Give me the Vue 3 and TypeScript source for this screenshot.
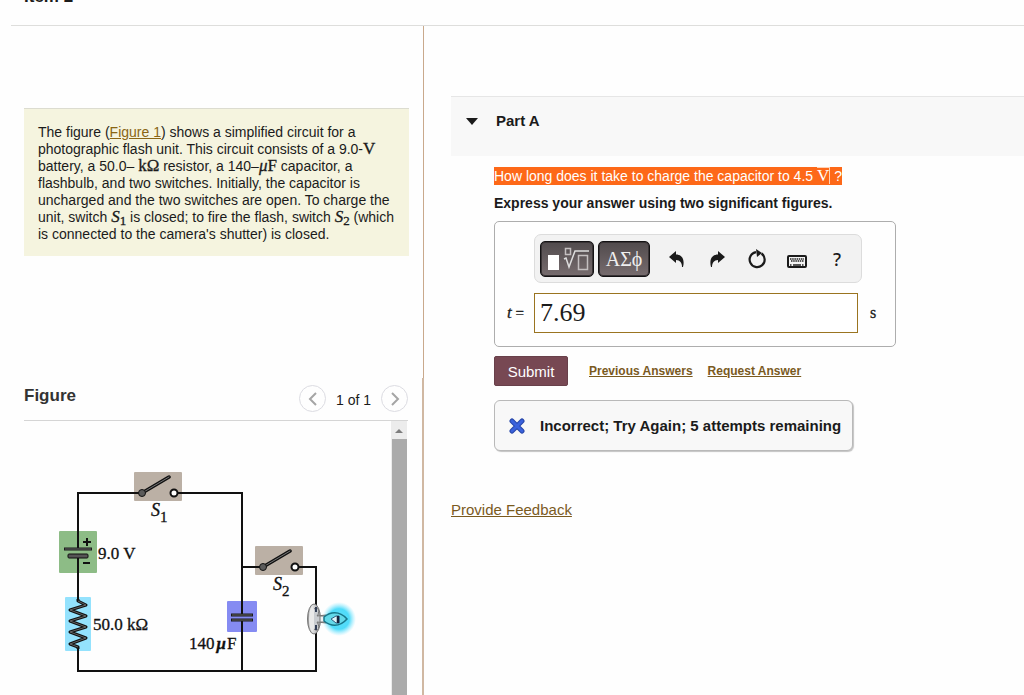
<script setup lang="ts">
import { ref } from 'vue'

const answer = ref('7.69')
const expanded = ref(true)
</script>

<template>
  <div class="page">
    <header class="item-bar"><h1>Item 2</h1></header>
    <main class="columns">
      <section class="left">
        <div class="upper">
          <p class="problem">
            The figure (<a href="#figure">Figure 1</a>) shows a simplified circuit for a photographic flash unit.
            This circuit consists of a 9.0-<span class="math">V</span> battery, a 50.0– <span class="math">kΩ</span>
            resistor, a 140–<span class="math"><i>μ</i>F</span> capacitor, a flashbulb, and two switches. Initially, the
            capacitor is uncharged and the two switches are open. To charge the unit, switch
            <span class="math"><i>S</i><sub>1</sub></span> is closed; to fire the flash, switch
            <span class="math"><i>S</i><sub>2</sub></span> (which is connected to the camera's shutter) is closed.
          </p>
        </div>
        <div id="figure" class="figure">
          <div class="figure-head">
            <h2>Figure</h2>
            <button class="round" type="button" aria-label="Previous figure">
              <svg width="10" height="14" viewBox="0 0 10 14"><path d="M8 1 2 7l6 6" /></svg>
            </button>
            <span class="count">1 of 1</span>
            <button class="round" type="button" aria-label="Next figure">
              <svg width="10" height="14" viewBox="0 0 10 14"><path d="m2 1 6 6-6 6" /></svg>
            </button>
          </div>
          <div class="viewer">
            <svg class="circuit" width="367" height="262" viewBox="24 421 367 262" role="img" aria-label="Flash unit circuit">
              <defs>
                <radialGradient id="glow">
                  <stop offset="0" stop-color="#5fdcf8" />
                  <stop offset=".6" stop-color="#4fdcfa" />
                  <stop offset="1" stop-color="#8fe8ff" stop-opacity="0" />
                </radialGradient>
                <linearGradient id="metal">
                  <stop offset="0" stop-color="#8c8c8c" />
                  <stop offset=".35" stop-color="#e6e6e6" />
                  <stop offset="1" stop-color="#9a9a9e" />
                </linearGradient>
              </defs>
              <rect x="134" y="472" width="48" height="29" rx="1" fill="#bbb0a5" />
              <rect x="255" y="546" width="48" height="29" rx="1" fill="#bbb0a5" />
              <rect x="59" y="531" width="38" height="42" rx="1" fill="#8dbc86" />
              <rect x="65" y="597" width="26" height="54" rx="1" fill="#94e2fd" />
              <rect x="227" y="601" width="30" height="31" rx="1" fill="#858bf2" />
              <g fill="none" stroke="#111" stroke-width="2">
                <path d="M142 493H78v56M78 557v43M78 646v25h238V567h-21M174 493h68v122M242 620v51M242 567h21" />
              </g>
              <g fill="none" stroke-linejoin="round">
                <path d="M78 599v2l8 4-16 5 16 6-16 5 16 6-16 5 16 6-16 6 8 3v2" stroke="#111" stroke-width="3" />
                <path d="m78 601 8 4-16 5 16 6-16 5 16 6-16 5 16 6-16 6 8 3" stroke="#666" stroke-width="1" />
              </g>
              <path d="M64 549h28M231 615h22M231 620h22" stroke="#1b1b1b" stroke-width="3" />
              <path d="M65 549h26M232 615h20M232 620h20" stroke="#666" />
              <rect x="68" y="554" width="20" height="4" rx="1" fill="#555" stroke="#111" />
              <path d="M83 542h8M87 538v8M83 563h7" stroke="#111" stroke-width="2" />
              <g stroke-linecap="round">
                <path d="m142 493 27-16M263 567l27-16" stroke="#111" stroke-width="3.500" />
                <path d="m142 493 27-16M263 567l27-16" stroke="#777" />
              </g>
              <g fill="#5b5b5b" stroke="#111">
                <circle cx="142" cy="493" r="3.500" />
                <circle cx="263" cy="567" r="3.500" />
              </g>
              <g fill="#fff" stroke="#111" stroke-width="2">
                <circle cx="174" cy="493" r="3.500" />
                <circle cx="295" cy="567" r="3.500" />
              </g>
              <circle cx="339" cy="619" r="17" fill="url(#glow)" />
              <ellipse cx="314" cy="619" rx="6.500" ry="15" fill="url(#metal)" stroke="#777" />
              <ellipse cx="312" cy="619" rx="3" ry="12" fill="#e9e9e9" />
              <path d="M314 609c5-4 6 4 3 7l9-1v8l-9-1c3 4 2 11-3 7" fill="#c9ccd0" stroke="#777" />
              <path d="M316 607v5M316 625v5" stroke="#333e55" stroke-width="2" />
              <path d="M320 616h5v6h-5z" fill="#eef2f4" stroke="#777" />
              <path d="M324 617c6-5 15-7 23 2-8 9-17 7-23 2z" fill="#63d9e9" stroke="#16768a" stroke-width="1.500" />
              <path d="m331 619 5-3h3v7h-3z" fill="#dff6fa" stroke="#2e5b81" />
              <path d="M338 616v7" stroke="#15213c" stroke-width="2.500" />
              <g class="labels">
                <text x="151" y="516" font-style="italic" font-size="18">S</text>
                <text x="160" y="522" font-size="15">1</text>
                <text x="273" y="590" font-style="italic" font-size="18">S</text>
                <text x="282" y="596" font-size="15">2</text>
                <text x="98" y="559">9.0 V</text>
                <text x="93" y="630">50.0 kΩ</text>
                <text x="189" y="649">140<tspan dx="2" font-style="italic" font-weight="bold">μ</tspan><tspan dx="1">F</tspan></text>
              </g>
            </svg>
            <div class="scroll"><span class="up"></span><span class="thumb"></span></div>
          </div>
        </div>
      </section>

      <section class="right">
        <div class="part-head">
          <button type="button" class="toggle" :aria-expanded="expanded" @click="expanded = !expanded">
            <span class="caret"></span>Part A
          </button>
        </div>
        <div class="part-body">
          <p class="question"><mark>How long does it take to charge the capacitor to 4.5 <span class="unit">V</span> ?</mark></p>
          <p class="express">Express your answer using two significant figures.</p>
          <form class="answer" @submit.prevent>
            <div class="tools">
              <button type="button" class="dark wide" aria-label="Templates">
                <svg width="52" height="34" viewBox="1 1 52 34" fill="none" stroke="#ddd">
                  <rect x="8" y="14" width="11" height="15" fill="#fff" stroke="none" />
                  <path d="M25.500 7.500h5v6h-5zM38.500 14.500h9v14h-9z" stroke="#c4bfc0" stroke-width="1.500" />
                  <path d="m24 18 2-1 3 9 6-16h14" stroke-width="1.500" />
                </svg>
              </button>
              <button type="button" class="dark">ΑΣϕ</button>
              <div class="icons">
                <button type="button" aria-label="Undo">
                  <svg width="16" height="16" viewBox="0 0 16 16"><path d="M0 6 7 0v3.500c6 0 9 5 7 12.500h-1c0-4-2-7-6-7V12z" /></svg>
                </button>
                <button type="button" aria-label="Redo">
                  <svg width="16" height="16" viewBox="0 0 16 16"><path d="M16 6 9 0v3.500C3 3.500 0 8.500 2 16h1c0-4 2-7 6-7v3z" /></svg>
                </button>
                <button type="button" aria-label="Reset">
                  <svg width="20" height="20" viewBox="0 0 20 20">
                    <path d="M14.500 4.500A7.500 7.500 0 1 1 9 3.200" fill="none" stroke="#1b1b1b" stroke-width="2.200" />
                    <path d="m9 0 6 4-5 4z" />
                  </svg>
                </button>
                <button type="button" aria-label="Keyboard">
                  <svg class="keyboard" width="20" height="13" viewBox="0 0 20 13">
                    <rect x="1" y="1" width="18" height="11" rx="1" fill="#f4f4f4" stroke="#1b1b1b" stroke-width="2" />
                    <path d="M3 4h14M4 6h13M3 10h2M15 10h2" fill="none" stroke="#222" stroke-width="1.500" stroke-dasharray="1.500 .7" />
                    <path d="M6 10h8" stroke="#222" stroke-width="1.500" />
                  </svg>
                </button>
                <button type="button" class="help" aria-label="Help">?</button>
              </div>
            </div>
            <div class="entry">
              <label for="answer"><i>t</i> =</label>
              <input id="answer" v-model="answer" type="text" />
              <span class="seconds">s</span>
            </div>
          </form>
          <div class="actions">
            <button type="button" class="submit">Submit</button>
            <a href="#previous">Previous Answers</a>
            <a href="#request">Request Answer</a>
          </div>
          <div class="result" role="status">
            <svg width="16" height="16" viewBox="0 0 16 16">
              <path d="m3 3 10 10M13 3 3 13" stroke="#2746a8" stroke-width="5" stroke-linecap="round" />
              <path d="m3 3 10 10M13 3 3 13" stroke="#3b62dc" stroke-width="3" stroke-linecap="round" />
            </svg>
            <span>Incorrect; Try Again; 5 attempts remaining</span>
          </div>
        </div>
        <a class="feedback" href="#feedback">Provide Feedback</a>
      </section>
    </main>
  </div>
</template>

<style>
body {
  background: #fefefe;
}
</style>

<style scoped>
.page {
  min-height: 100vh;
  display: flex;
  flex-direction: column;
  font-family: "Liberation Sans", Arial, sans-serif;
  font-size: 14px;
  color: #1b1b1b;
}
.page *,
.page {
  box-sizing: border-box;
}
h1,
h2,
p {
  margin: 0;
}
button {
  font: inherit;
  color: inherit;
  padding: 0;
  border: 0;
  background: none;
  cursor: pointer;
}
a {
  color: #7a5a1e;
}
.item-bar {
  height: 26px;
  margin-left: 11px;
  padding-left: 13px;
  border-bottom: 1px solid #dededc;
  overflow: hidden;
  display: flex;
  align-items: flex-start;
}
.item-bar h1 {
  font-size: 17px;
  line-height: 20px;
  margin-top: -13px;
}
.columns {
  flex: 1;
  display: grid;
  grid-template-columns: 424fr 600fr;
}
.left {
  min-width: 0;
  display: flex;
  flex-direction: column;
}
.upper {
  height: 352px;
  padding: 82px 14px 0 24px;
  border-right: 1px solid #c9a98c;
}
.problem {
  padding: 15px 12px 13px 14px;
  border-top: 1px solid #dcdcd0;
  background: #f5f4df;
  line-height: 17px;
}
.problem a {
  color: #8a6514;
}
.math {
  font-family: "Liberation Serif", serif;
  font-size: 17px;
  line-height: 0;
  -webkit-text-stroke: 0.3px;
}
.math sub {
  font-size: 13px;
  line-height: 0;
  vertical-align: -3px;
}
.figure {
  flex: 1;
  display: flex;
  flex-direction: column;
  padding: 0 14px 0 24px;
  border-right: 2px solid #d0b8a2;
}
.figure-head {
  height: 43px;
  padding-top: 7px;
  display: flex;
  align-items: flex-start;
  border-bottom: 1px solid #d5d5d5;
}
.figure-head h2 {
  flex: 1;
  font-size: 17px;
  line-height: 22px;
  color: #333;
}
.round {
  width: 27px;
  height: 27px;
  border: 1px solid #dcdce2;
  border-radius: 50%;
  display: grid;
  place-items: center;
}
.round path {
  fill: none;
  stroke: #a5a5a5;
  stroke-width: 2;
}
.count {
  width: 55px;
  text-align: center;
  line-height: 30px;
}
.viewer {
  flex: 1;
  display: flex;
  justify-content: space-between;
}
.circuit {
  flex: 0 1 auto;
  min-width: 0;
}
.labels {
  font-family: "Liberation Serif", serif;
  font-size: 17px;
  fill: #111;
  stroke: #111;
  stroke-width: 0.3px;
}
.scroll {
  flex: 0 0 16px;
  margin-right: 1px;
  background: #ececec;
  display: flex;
  flex-direction: column;
  align-items: center;
}
.up {
  margin: 8px 0 6px;
  border: 4px solid transparent;
  border-top: 0;
  border-bottom-color: #7d7d7d;
}
.thumb {
  flex: 1;
  width: 15px;
  background: #ababab;
}
.right {
  min-width: 0;
  padding: 70px 0 0 27px;
}
.part-head {
  height: 60px;
  border-top: 1px solid #e6e6e6;
  background: #f8f8f8;
}
.toggle {
  display: flex;
  align-items: center;
  padding: 14px 0 0 15px;
  font-size: 15px;
  line-height: 20px;
  font-weight: bold;
}
.caret {
  margin-right: 18px;
  border: 6px solid transparent;
  border-bottom: 0;
  border-top: 7px solid #1b1b1b;
}
.part-body {
  padding: 11px 20px 0 43px;
}
.question {
  display: flex;
}
.question mark {
  background: #fd6818;
  color: #fff;
  line-height: 17px;
}
.unit {
  display: inline-block;
  border-top: 1px solid #ffd2b5;
  border-right: 1px solid #ffd2b5;
  font-family: "Liberation Serif", serif;
  font-size: 17px;
  line-height: 16px;
}
.express {
  margin-top: 9px;
  font-weight: bold;
  line-height: 18px;
}
.answer {
  width: 402px;
  max-width: 100%;
  margin-top: 9px;
  padding: 12px 20px 13px 12px;
  border: 1px solid #adadad;
  border-radius: 5px;
}
.tools {
  height: 49px;
  margin: 0 13px 0 27px;
  padding: 6px 3px 6px 5px;
  display: flex;
  gap: 4px;
  border: 1px solid #dcdcdc;
  border-radius: 7px;
  background: #f2f2f2;
}
.dark {
  flex: 0 0 52px;
  height: 36px;
  display: grid;
  place-items: center;
  border: 1px solid #141214;
  border-radius: 5px;
  background: linear-gradient(#514b4d, #776c6e);
  color: #eee;
  font-family: "Liberation Serif", serif;
  font-size: 20px;
  box-shadow: inset 0 0 0 1px #383335;
}
.wide {
  flex-basis: 54px;
}
.icons {
  flex: 1;
  padding: 0 1px 0 3px;
  display: flex;
}
.icons button {
  flex: 1;
  height: 36px;
  display: grid;
  place-items: center;
}
.icons path {
  fill: #1b1b1b;
}
.icons path[fill="none"] {
  fill: none;
}
.keyboard {
  margin-top: 4px;
}
.icons .help {
  font-family: "Noto Sans", sans-serif;
  font-size: 18px;
  font-weight: 500;
}
.entry {
  margin-top: 10px;
  display: flex;
  align-items: center;
}
.entry label {
  flex: 0 0 27px;
  font-family: "Liberation Serif", serif;
  font-size: 15px;
  -webkit-text-stroke: 0.3px;
}
.entry i {
  font-size: 17px;
}
.entry input {
  flex: 1;
  min-width: 0;
  height: 40px;
  padding: 0 5px;
  border: 1px solid #9a7420;
  border-radius: 0;
  background: #fff;
  color: #1b1b1b;
  font-family: "Liberation Serif", serif;
  font-size: 26px;
  outline: 0;
}
.seconds {
  width: 5px;
  margin: 0 0 0 12px;
  font-family: "Liberation Serif", serif;
  font-size: 16px;
  -webkit-text-stroke: 0.3px;
}
.actions {
  margin-top: 9px;
  display: flex;
  align-items: center;
  font-size: 12px;
  font-weight: bold;
}
.submit {
  width: 74px;
  height: 30px;
  margin-right: 21px;
  border: 1px solid #68404a;
  border-radius: 2px;
  background: #774853;
  color: #fff;
  font-size: 15px;
  font-weight: normal;
}
.actions a + a {
  margin-left: 15px;
}
.result {
  width: 359px;
  max-width: 100%;
  height: 51px;
  margin-top: 14px;
  padding-left: 14px;
  display: flex;
  align-items: center;
  gap: 15px;
  border: 1px solid #b9b9b9;
  border-radius: 6px;
  background: #f8f8f8;
  box-shadow: 1px 1px 1px #c4c4c4;
  font-size: 15px;
  font-weight: bold;
}
.feedback {
  display: inline-block;
  margin-top: 49px;
  font-size: 15px;
  line-height: 20px;
}
</style>
